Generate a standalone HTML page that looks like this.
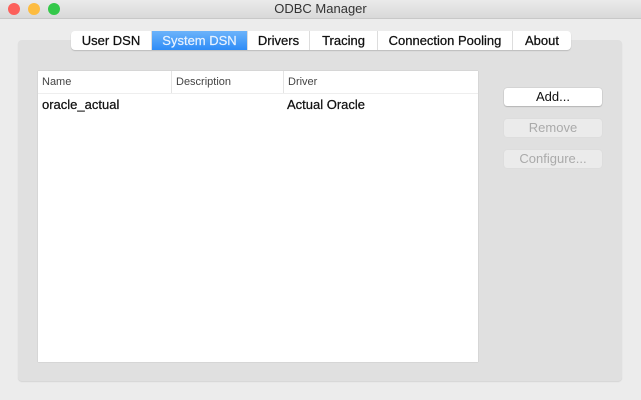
<!DOCTYPE html>
<html><head><style>
body{margin:0;width:641px;height:400px;background:#ececec;font-family:"Liberation Sans",sans-serif;position:relative;overflow:hidden}
.title{position:absolute;left:0;top:0;width:641px;height:18px;background:linear-gradient(#ebebeb,#d9d9d9);border-bottom:1px solid #c8c8c8;text-align:center;font-size:13px;line-height:18px;color:#333}
.dot{position:absolute;top:3px;width:12px;height:12px;border-radius:50%}
.group{position:absolute;left:18px;top:40px;width:604px;height:341px;background:#e0e0e0;border-radius:4px;box-shadow:0 1px 1px #d4d4d4}
.tabs{position:absolute;top:31px;left:71px;height:19px;display:flex;background:#fff;border-radius:4px;box-shadow:0 1px 1px #bbb;font-size:13px;line-height:19px;color:#111;-webkit-text-stroke:0.25px #111}
.tabs div{text-align:center;border-right:1px solid #ddd}
.tabs .sel{background:linear-gradient(#6cb3fa,#2e8cf7);color:#e8f2ff;-webkit-text-stroke:0.2px #e8f2ff}
.table{position:absolute;left:38px;top:71px;width:440px;height:291px;background:#fff;box-shadow:0 0 1px #aaa}
.hdr{height:22px;border-bottom:1px solid #eee;font-size:11px;color:#444;position:relative}
.hdr span,.row span{position:absolute}
.hdr span{top:5px}
.sep{position:absolute;top:0;width:1px;height:22px;background:#e4e4e4}
.row{position:relative;font-size:13px;color:#111;height:20px;-webkit-text-stroke:0.25px #111}
.row span{top:3px}
.btn{position:absolute;left:504px;width:98px;height:18px;border-radius:3px;background:#fff;box-shadow:0 0 1px #999,0 1px 1px #bbb;font-size:13px;text-align:center;line-height:18px;color:#111}
.btn.dis{background:#ebebeb;color:#aaa;box-shadow:0 0 1px #ccc}
</style></head><body>
<div class="title">ODBC Manager
<div class="dot" style="left:8px;background:#fc605b"></div>
<div class="dot" style="left:28px;background:#fdbc40"></div>
<div class="dot" style="left:48px;background:#34c84a"></div>
</div>
<div class="group"></div>
<div class="tabs">
<div style="width:80px">User DSN</div>
<div class="sel" style="width:95px">System DSN</div>
<div style="width:61px">Drivers</div>
<div style="width:67px">Tracing</div>
<div style="width:134px">Connection Pooling</div>
<div style="width:58px;border:none">About</div>
</div>
<div class="table">
<div class="hdr"><span style="left:4px">Name</span><div class="sep" style="left:133px"></div><span style="left:138px">Description</span><div class="sep" style="left:245px"></div><span style="left:250px">Driver</span></div>
<div class="row"><span style="left:4px">oracle_actual</span><span style="left:249px">Actual Oracle</span></div>
</div>
<div class="btn" style="top:88px">Add...</div>
<div class="btn dis" style="top:119px">Remove</div>
<div class="btn dis" style="top:150px">Configure...</div>
</body></html>
